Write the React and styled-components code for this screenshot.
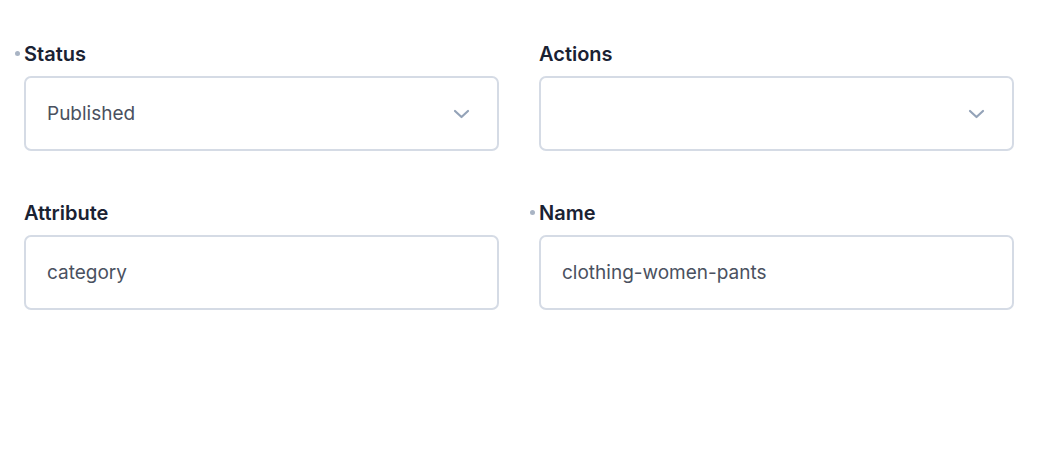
import React from "react";
import styled, { createGlobalStyle } from "styled-components";

const Global = createGlobalStyle`
  html, body { margin: 0; padding: 0; background: #ffffff; }
  body { font-family: Inter, "Noto Sans", sans-serif; }
`;

const Page = styled.div`
  padding: 42px 0 0 24px;
  width: 990px;
`;

const Grid = styled.div`
  display: grid;
  grid-template-columns: 475px 475px;
  column-gap: 40px;
  row-gap: 50px;
`;

const Field = styled.div`
  display: flex;
  flex-direction: column;
  gap: 10px;
`;

const Label = styled.label`
  position: relative;
  display: block;
  font-size: 20px;
  line-height: 24px;
  font-weight: 600;
  color: #1a2233;
  ${(p) =>
    p.$required &&
    `
    &::before {
      content: "";
      position: absolute;
      left: -9px;
      top: 9px;
      width: 5px;
      height: 5px;
      border-radius: 50%;
      background: #a9b4c4;
    }
  `}
`;

const Box = styled.div`
  box-sizing: border-box;
  height: 75px;
  border: 2px solid #d5dbe5;
  border-radius: 7px;
  display: flex;
  align-items: center;
  justify-content: space-between;
  padding: 0 27px 0 21px;
  font-size: 19px;
  color: #4a5160;
`;

const Chevron = () => (
  <svg width="17" height="16" viewBox="0 0 17 16" fill="none">
    <path d="M2 5 L8.5 11 L15 5" stroke="#94a3b8" strokeWidth="2.2" strokeLinecap="round" strokeLinejoin="round" />
  </svg>
);

export default function App() {
  return (
    <>
      <Global />
      <Page>
        <Grid>
          <Field>
            <Label $required>Status</Label>
            <Box>
              <span>Published</span>
              <Chevron />
            </Box>
          </Field>
          <Field>
            <Label>Actions</Label>
            <Box>
              <span></span>
              <Chevron />
            </Box>
          </Field>
          <Field>
            <Label>Attribute</Label>
            <Box>
              <span>category</span>
            </Box>
          </Field>
          <Field>
            <Label $required>Name</Label>
            <Box>
              <span>clothing-women-pants</span>
            </Box>
          </Field>
        </Grid>
      </Page>
    </>
  );
}
